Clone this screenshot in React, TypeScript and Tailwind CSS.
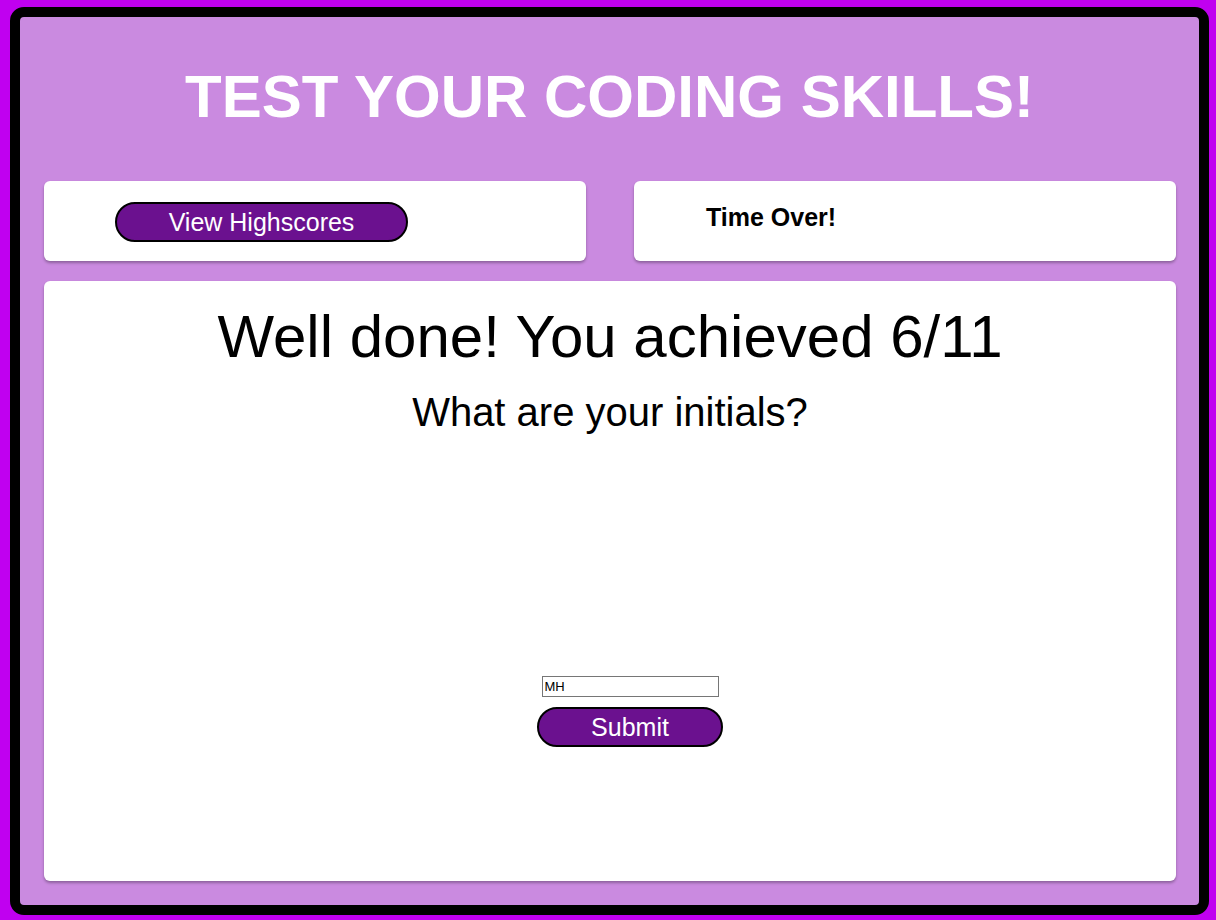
export default function App() {
  return (
    <div className="min-h-screen w-full bg-[#c000f0] pt-[7px] pl-[10px]" style={{ fontFamily: '"Liberation Sans", Arial, sans-serif' }}>
      <div className="w-[1199px] h-[908px] border-[10px] border-black rounded-[14px] bg-[#ca8ae0] flex flex-col">
        <div className="h-[164px] flex items-center justify-center pb-[4px]">
          <h1 className="text-white font-bold text-[60px] leading-none">TEST YOUR CODING SKILLS!</h1>
        </div>
        <div className="pl-6 pr-[23px] flex flex-col">
          <div className="grid grid-cols-2 gap-12">
            <div className="h-[80px] bg-white rounded-md shadow-[0_2px_3px_rgba(0,0,0,0.3)] pl-[71px] pt-[21px]">
              <button className="w-[293px] h-[40px] rounded-full bg-[#6b118f] border-2 border-black text-white text-[25px] leading-none">
                View Highscores
              </button>
            </div>
            <div className="h-[80px] bg-white rounded-md shadow-[0_2px_3px_rgba(0,0,0,0.3)] pl-[72px] pt-[22px]">
              <p className="font-bold text-[25px] leading-[28px] text-black">Time Over!</p>
            </div>
          </div>
          <div className="mt-5 h-[600px] bg-white rounded-md shadow-[0_2px_3px_rgba(0,0,0,0.3)] flex flex-col items-center">
            <h2 className="mt-[21px] text-[60px] leading-[70px] text-black">Well done! You achieved 6/11</h2>
            <p className="mt-[17px] text-[40px] leading-[46px] text-black">What are your initials?</p>
            <div className="mt-[241px] flex flex-col items-center pl-10">
              <input
                defaultValue="MH"
                className="w-[177px] h-[21px] border border-[#767676] text-[13px] px-[2px] text-black outline-none"
                style={{ fontFamily: '"Liberation Sans", Arial, sans-serif' }}
              />
              <button className="mt-[10px] w-[186px] h-[40px] rounded-full bg-[#6b118f] border-2 border-black text-white text-[25px] leading-none">
                Submit
              </button>
            </div>
          </div>
        </div>
      </div>
    </div>
  );
}
